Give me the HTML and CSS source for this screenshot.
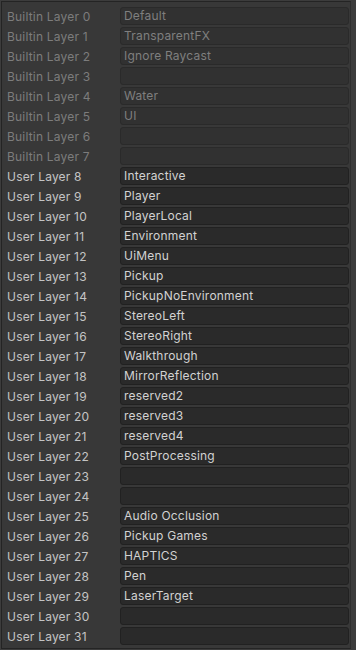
FILE: index.html
```html
<!DOCTYPE html>
<html>
<head>
<meta charset="utf-8">
<link rel="stylesheet" href="styles.css">
</head>
<body>
<div class="panel">
  <div class="list">
    <div class="row builtin"><div class="label">Builtin Layer 0</div><div class="field">Default</div></div>
    <div class="row builtin"><div class="label">Builtin Layer 1</div><div class="field">TransparentFX</div></div>
    <div class="row builtin"><div class="label">Builtin Layer 2</div><div class="field">Ignore Raycast</div></div>
    <div class="row builtin"><div class="label">Builtin Layer 3</div><div class="field"></div></div>
    <div class="row builtin"><div class="label">Builtin Layer 4</div><div class="field">Water</div></div>
    <div class="row builtin"><div class="label">Builtin Layer 5</div><div class="field">UI</div></div>
    <div class="row builtin"><div class="label">Builtin Layer 6</div><div class="field"></div></div>
    <div class="row builtin"><div class="label">Builtin Layer 7</div><div class="field"></div></div>
    <div class="row"><div class="label">User Layer 8</div><div class="field">Interactive</div></div>
    <div class="row"><div class="label">User Layer 9</div><div class="field">Player</div></div>
    <div class="row"><div class="label">User Layer 10</div><div class="field">PlayerLocal</div></div>
    <div class="row"><div class="label">User Layer 11</div><div class="field">Environment</div></div>
    <div class="row"><div class="label">User Layer 12</div><div class="field">UiMenu</div></div>
    <div class="row"><div class="label">User Layer 13</div><div class="field">Pickup</div></div>
    <div class="row"><div class="label">User Layer 14</div><div class="field">PickupNoEnvironment</div></div>
    <div class="row"><div class="label">User Layer 15</div><div class="field">StereoLeft</div></div>
    <div class="row"><div class="label">User Layer 16</div><div class="field">StereoRight</div></div>
    <div class="row"><div class="label">User Layer 17</div><div class="field">Walkthrough</div></div>
    <div class="row"><div class="label">User Layer 18</div><div class="field">MirrorReflection</div></div>
    <div class="row"><div class="label">User Layer 19</div><div class="field">reserved2</div></div>
    <div class="row"><div class="label">User Layer 20</div><div class="field">reserved3</div></div>
    <div class="row"><div class="label">User Layer 21</div><div class="field">reserved4</div></div>
    <div class="row"><div class="label">User Layer 22</div><div class="field">PostProcessing</div></div>
    <div class="row"><div class="label">User Layer 23</div><div class="field"></div></div>
    <div class="row"><div class="label">User Layer 24</div><div class="field"></div></div>
    <div class="row"><div class="label">User Layer 25</div><div class="field">Audio Occlusion</div></div>
    <div class="row"><div class="label">User Layer 26</div><div class="field">Pickup Games</div></div>
    <div class="row"><div class="label">User Layer 27</div><div class="field">HAPTICS</div></div>
    <div class="row"><div class="label">User Layer 28</div><div class="field">Pen</div></div>
    <div class="row"><div class="label">User Layer 29</div><div class="field">LaserTarget</div></div>
    <div class="row"><div class="label">User Layer 30</div><div class="field"></div></div>
    <div class="row"><div class="label">User Layer 31</div><div class="field"></div></div>
  </div>
</div>
</body>
</html>
```
FILE: styles.css
```css
html, body {
  margin: 0;
  padding: 0;
  background: #3c3c3c;
  width: 356px;
  height: 650px;
  overflow: hidden;
}
.panel {
  margin: 1px 0 0 1px;
  width: 348px;
  height: 646px;
  border: 1px solid #242424;
  border-right-color: #2e2e2e;
  background: #383838;
  font-family: Inter, "Noto Sans", sans-serif;
  font-size: 12px;
  letter-spacing: 0.2px;
}
.list {
  padding: 5px 0 0 5px;
  display: flex;
  flex-direction: column;
  gap: 2px;
}
.row {
  display: flex;
  align-items: center;
  height: 18px;
}
.label {
  width: 113px;
  color: #c4c4c4;
}
.field {
  flex: 1;
  margin-right: 1px;
  height: 16px;
  line-height: 16px;
  border: 1px solid #212121;
  border-radius: 3px;
  background: #2a2a2a;
  color: #d2d2d2;
  padding-left: 3px;
  white-space: nowrap;
}
.builtin .label {
  color: #7c7c7c;
}
.builtin .field {
  background: #313131;
  border-color: #2a2a2a;
  color: #7f7f7f;
}
```
